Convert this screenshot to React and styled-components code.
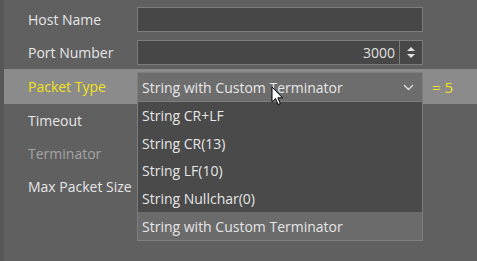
import React from 'react'
import styled, { createGlobalStyle } from 'styled-components'

const GlobalStyle = createGlobalStyle`
  html, body {
    margin: 0;
    padding: 0;
    background: #606060;
  }
  body {
    font-family: 'Open Sans', 'Noto Sans', sans-serif;
    font-size: 14px;
    color: #e4e4e4;
  }
`

const Panel = styled.div`
  position: relative;
  width: 473px;
  height: 254px;
  padding-top: 7px;
  border-left: 4px solid #575757;
  background: #606060;
  overflow: hidden;
`

const Row = styled.div`
  display: grid;
  grid-template-columns: 133px 286px 1fr;
  align-items: center;
  height: ${p => p.h}px;
  margin-bottom: ${p => p.mb || 0}px;
  background: ${p => (p.active ? '#8b8b8b' : 'transparent')};
`

const Label = styled.div`
  padding-left: 24px;
  white-space: nowrap;
  color: ${p => (p.active ? '#f2e21a' : p.dim ? '#a3a3a3' : '#e6e6e6')};
`

const Input = styled.div`
  box-sizing: border-box;
  height: 25px;
  display: flex;
  align-items: center;
  justify-content: flex-end;
  background: #474747;
  border: 1px solid #7c7c7c;
`

const NumberText = styled.span`
  flex: 1;
  text-align: right;
  padding-right: 4px;
  color: #e0e0e0;
`

const Spinner = styled.div`
  width: 22px;
  height: 100%;
  border-left: 1px solid #7c7c7c;
  display: flex;
  flex-direction: column;
  align-items: center;
  justify-content: center;
  gap: 3px;
`

const Tri = styled.div`
  width: 0;
  height: 0;
  border-left: 4px solid transparent;
  border-right: 4px solid transparent;
  ${p =>
    p.up
      ? 'border-bottom: 4px solid #e0e0e0;'
      : 'border-top: 4px solid #e0e0e0;'}
`

const SelectWrap = styled.div`
  position: relative;
  height: 29px;
`

const Select = styled.div`
  box-sizing: border-box;
  height: 29px;
  display: flex;
  align-items: center;
  justify-content: space-between;
  padding: 0 8px 0 4px;
  background: #6d6d6d;
  border: 1px solid #7e7e7e;
  border-bottom: none;
  color: #e8e8e8;
`

const Dropdown = styled.div`
  position: absolute;
  top: 29px;
  left: 0;
  width: 286px;
  box-sizing: border-box;
  background: #4a4a4a;
  border: 1px solid #7e7e7e;
  z-index: 2;
`

const Item = styled.div`
  height: 27.6px;
  display: flex;
  align-items: center;
  padding-left: 4px;
  color: #e6e6e6;
  background: ${p => (p.selected ? '#6b6b6b' : 'transparent')};
`

const Result = styled.div`
  padding-left: 9px;
  font-size: 15px;
  color: #f2e21a;
`

const Cursor = styled.svg`
  position: absolute;
  left: 267px;
  top: 86px;
  z-index: 3;
`

const items = [
  'String CR+LF',
  'String CR(13)',
  'String LF(10)',
  'String Nullchar(0)',
  'String with Custom Terminator'
]

const App = () => (
  <>
    <GlobalStyle />
    <Panel>
      <Row h={25} mb={8}>
        <Label>Host Name</Label>
        <Input />
      </Row>
      <Row h={25} mb={4}>
        <Label>Port Number</Label>
        <Input>
          <NumberText>3000</NumberText>
          <Spinner>
            <Tri up />
            <Tri />
          </Spinner>
        </Input>
      </Row>
      <Row h={35} active>
        <Label active>Packet Type</Label>
        <SelectWrap>
          <Select>
            <span>String with Custom Terminator</span>
            <svg width="11" height="7" viewBox="0 0 11 7">
              <polyline
                points="1,1 5.5,5.5 10,1"
                fill="none"
                stroke="#e0e0e0"
                strokeWidth="1.3"
              />
            </svg>
          </Select>
          <Dropdown>
            {items.map((it, i) => (
              <Item key={it} selected={i === items.length - 1}>
                {it}
              </Item>
            ))}
          </Dropdown>
        </SelectWrap>
        <Result>= 5</Result>
      </Row>
      <Row h={33}>
        <Label>Timeout</Label>
      </Row>
      <Row h={33}>
        <Label dim>Terminator</Label>
      </Row>
      <Row h={33}>
        <Label>Max Packet Size</Label>
      </Row>
      <Cursor width="13" height="20" viewBox="0 0 13 20">
        <path
          d="M1 1 L1 16 L4.5 12.5 L7 18.5 L9.3 17.5 L6.8 11.8 L11.5 11.8 Z"
          fill="#ffffff"
          stroke="#000000"
          strokeWidth="1"
          strokeLinejoin="round"
        />
      </Cursor>
    </Panel>
  </>
)

export default App
